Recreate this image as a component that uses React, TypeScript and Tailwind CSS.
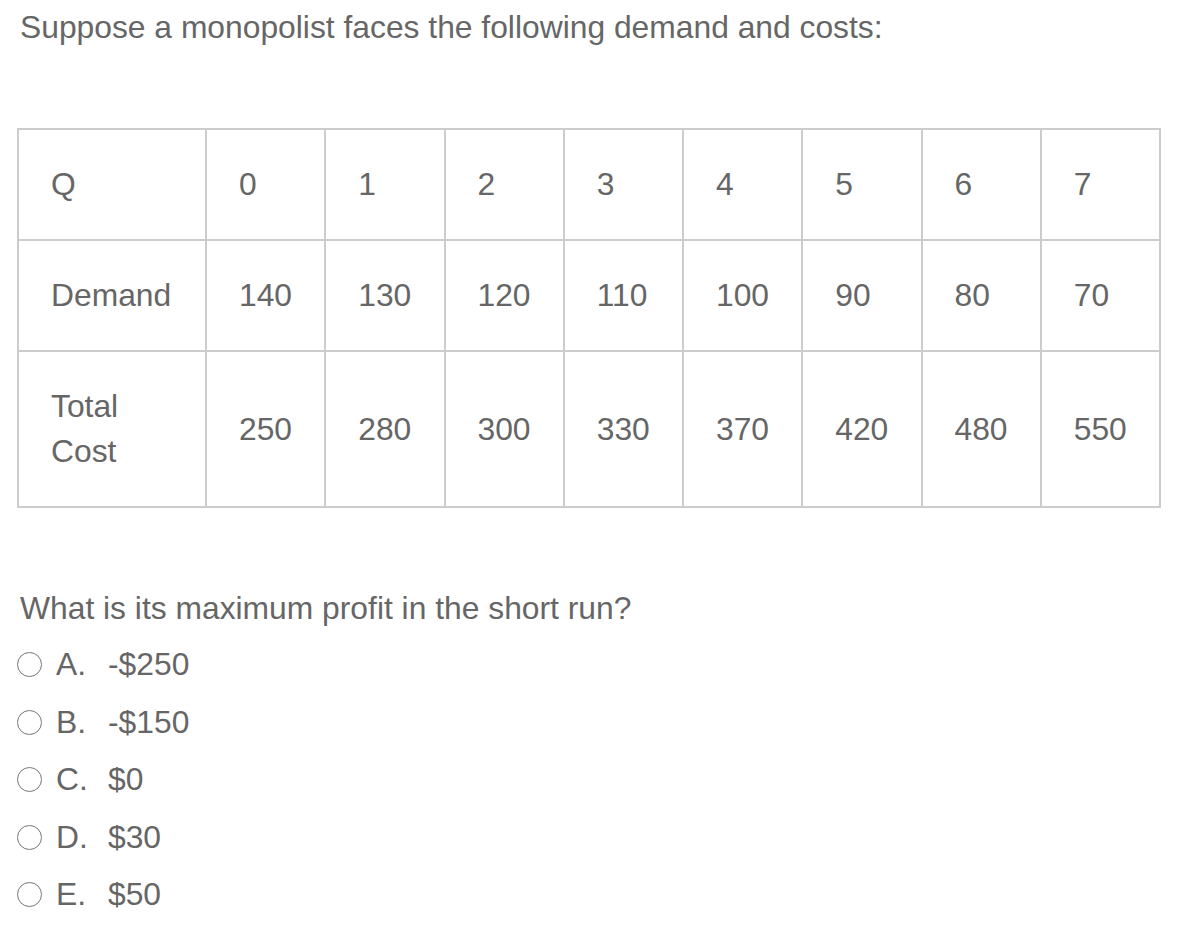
import React from "react";

const qs = ["0", "1", "2", "3", "4", "5", "6", "7"];
const demand = ["140", "130", "120", "110", "100", "90", "80", "70"];
const cost = ["250", "280", "300", "330", "370", "420", "480", "550"];
const options = [
  ["A.", "-$250"],
  ["B.", "-$150"],
  ["C.", "$0"],
  ["D.", "$30"],
  ["E.", "$50"],
];

export default function App() {
  const cell = "border-2 border-[#cccccc] pl-[32px] pr-[4px] py-[32px] text-left align-middle";
  return (
    <div
      className="w-[1178px] h-[930px] bg-white text-[#666666] text-[31.8px] leading-[45px]"
      style={{ fontFamily: '"Liberation Sans", Arial, sans-serif' }}
    >
      <div className="pl-[20px] pt-[5px]">Suppose a monopolist faces the following demand and costs:</div>
      <div className="pl-[17px] pt-[78px]">
        <table className="table-fixed border-collapse w-[1144px]">
          <colgroup>
            <col className="w-[188px]" />
            {qs.map((q) => (
              <col key={q} />
            ))}
          </colgroup>
          <tbody>
            <tr>
              <td className={cell}>Q</td>
              {qs.map((v) => (
                <td key={v} className={cell}>{v}</td>
              ))}
            </tr>
            <tr>
              <td className={cell}>Demand</td>
              {demand.map((v, i) => (
                <td key={i} className={cell}>{v}</td>
              ))}
            </tr>
            <tr>
              <td className={cell + " pr-[40px]"}>Total Cost</td>
              {cost.map((v, i) => (
                <td key={i} className={cell}>{v}</td>
              ))}
            </tr>
          </tbody>
        </table>
      </div>
      <div className="pl-[20px] pt-[78px]">What is its maximum profit in the short run?</div>
      <div className="flex flex-col pt-[5px]">
        {options.map(([l, v]) => (
          <div key={l} className="flex items-center h-[57.5px] pl-[17px]">
            <span className="w-[25px] h-[25px] rounded-full border-[1.5px] border-[#777777] shrink-0" />
            <span className="ml-[14px] w-[52px]">{l}</span>
            <span>{v}</span>
          </div>
        ))}
      </div>
    </div>
  );
}
